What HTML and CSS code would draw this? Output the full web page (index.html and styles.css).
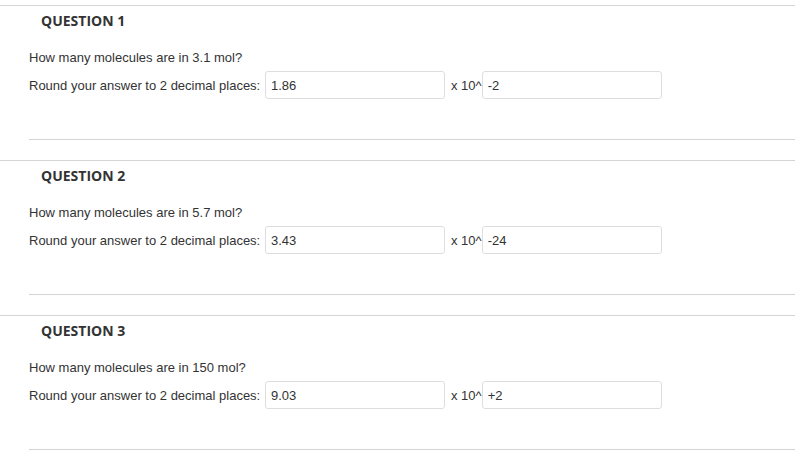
FILE: index.html
```html
<!DOCTYPE html>
<html>
<head>
<meta charset="utf-8">
<link rel="stylesheet" href="styles.css">
</head>
<body>
<div class="question">
  <h2 class="q-title">QUESTION 1</h2>
  <div class="q-body">
    <p class="q-text">How many molecules are in 3.1 mol?</p>
    <div class="q-row">
      <span class="q-label">Round your answer to 2 decimal places:</span>
      <input class="q-input" type="text" value="1.86">
      <span class="q-exp">x 10^</span>
      <input class="q-input" type="text" value="-2">
    </div>
  </div>
</div>
<div class="question">
  <h2 class="q-title">QUESTION 2</h2>
  <div class="q-body">
    <p class="q-text">How many molecules are in 5.7 mol?</p>
    <div class="q-row">
      <span class="q-label">Round your answer to 2 decimal places:</span>
      <input class="q-input" type="text" value="3.43">
      <span class="q-exp">x 10^</span>
      <input class="q-input" type="text" value="-24">
    </div>
  </div>
</div>
<div class="question">
  <h2 class="q-title">QUESTION 3</h2>
  <div class="q-body">
    <p class="q-text">How many molecules are in 150 mol?</p>
    <div class="q-row">
      <span class="q-label">Round your answer to 2 decimal places:</span>
      <input class="q-input" type="text" value="9.03">
      <span class="q-exp">x 10^</span>
      <input class="q-input" type="text" value="+2">
    </div>
  </div>
</div>
</body>
</html>
```
FILE: styles.css
```css
html, body {
  margin: 0;
  padding: 0;
  background: #fff;
}
body {
  font-family: "Liberation Sans", Arial, sans-serif;
  font-size: 13px;
  color: #333;
}
.question {
  margin-top: 5px;
  margin-bottom: 20px;
  border-top: 1px solid #d4d4d4;
}
.question + .question {
  margin-top: 0;
}
.q-title {
  margin: 0;
  padding: 5px 0 0 41px;
  font-family: "Open Sans", sans-serif;
  font-weight: 700;
  font-size: 14px;
  line-height: 20px;
  color: #333;
}
.q-body {
  margin-left: 29px;
  padding-bottom: 40px;
  border-bottom: 1px solid #d4d4d4;
}
.q-text {
  margin: 18px 0 0 0;
  line-height: 17px;
}
.q-row {
  margin-top: 5px;
  display: flex;
  align-items: center;
  height: 28px;
}
.q-label {
  flex: 0 0 236px;
  white-space: nowrap;
}
.q-input {
  box-sizing: border-box;
  flex: 0 0 180px;
  width: 180px;
  height: 28px;
  margin: 0;
  padding: 0 5px;
  border: 1px solid #dedede;
  border-radius: 3px;
  font-family: "Liberation Sans", Arial, sans-serif;
  font-size: 13px;
  color: #333;
  background: #fff;
  outline: none;
}
.q-exp {
  flex: 0 0 29px;
  margin-left: 6px;
  white-space: nowrap;
  overflow: visible;
}
```
